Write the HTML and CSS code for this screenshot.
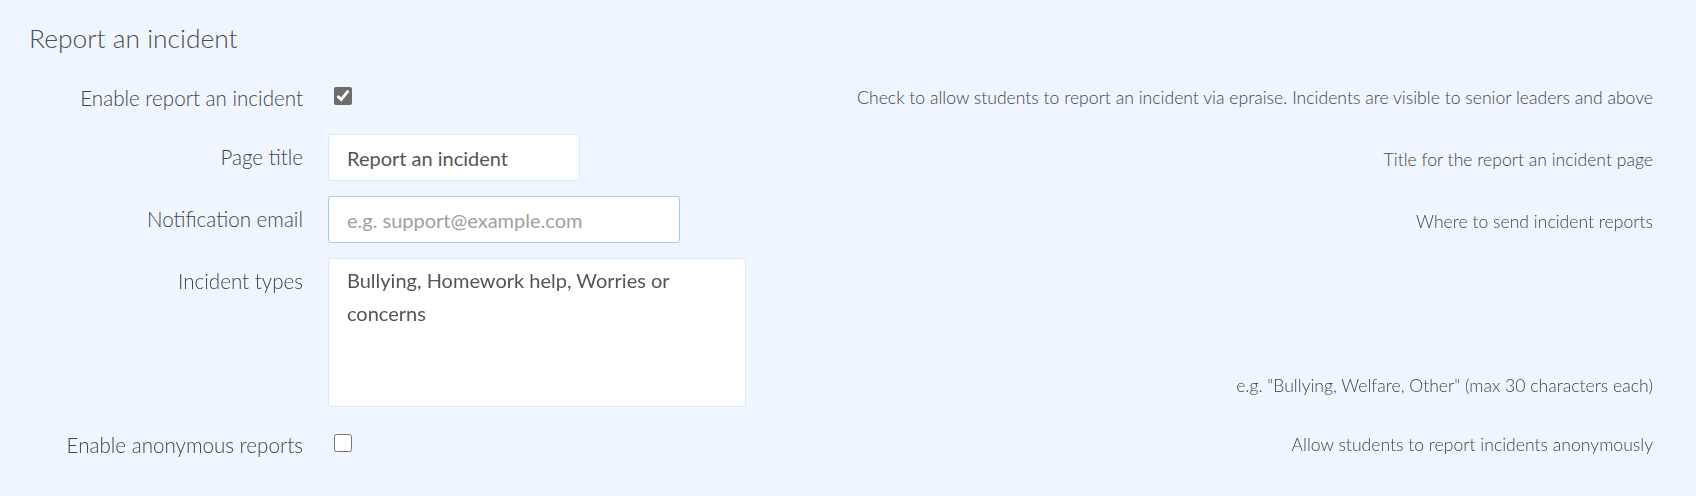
FILE: index.html
```html
<!DOCTYPE html>
<html lang="en">
<head>
    <meta charset="UTF-8">
    <meta name="viewport" content="width=device-width, initial-scale=1.0">
    <title>Report an incident</title>
    <link rel="stylesheet" href="styles.css">
</head>
<body>
    <div class="panel">
        <h2 class="panel-title">Report an incident</h2>

        <div class="form-row">
            <label class="form-label" for="enable-report">Enable report an incident</label>
            <div class="form-control check-wrap">
                <input type="checkbox" id="enable-report" checked>
            </div>
            <div class="form-help">Check to allow students to report an incident via epraise. Incidents are visible to senior leaders and above</div>
        </div>

        <div class="form-row">
            <label class="form-label" for="page-title">Page title</label>
            <div class="form-control">
                <input type="text" class="text-input title-input" id="page-title" value="Report an incident">
            </div>
            <div class="form-help">Title for the report an incident page</div>
        </div>

        <div class="form-row">
            <label class="form-label" for="notify-email">Notification email</label>
            <div class="form-control">
                <input type="email" class="text-input email-input" id="notify-email" placeholder="e.g. support@example.com" autofocus>
            </div>
            <div class="form-help">Where to send incident reports</div>
        </div>

        <div class="form-row">
            <label class="form-label" for="incident-types">Incident types</label>
            <div class="form-control">
                <textarea class="text-input types-input" id="incident-types">Bullying, Homework help, Worries or concerns</textarea>
            </div>
            <div class="form-help">e.g. "Bullying, Welfare, Other" (max 30 characters each)</div>
        </div>

        <div class="form-row">
            <label class="form-label" for="anon-reports">Enable anonymous reports</label>
            <div class="form-control check-wrap">
                <input type="checkbox" id="anon-reports">
            </div>
            <div class="form-help">Allow students to report incidents anonymously</div>
        </div>
    </div>
    <script>
        document.getElementById('notify-email').focus();
    </script>
</body>
</html>
```

FILE: styles.css
```css
body {
    margin: 0;
    background-color: #eff6ff;
    font-family: Lato, "Open Sans", sans-serif;
    color: #555;
}

.panel {
    padding: 19px 43px 20px 29px;
}

.panel-title {
    margin: 0 0 18px 0;
    font-size: 26.4px;
    font-weight: 300;
    line-height: 38px;
    color: #4d4d4d;
}

.form-row {
    display: flex;
    margin-bottom: 15px;
}

.form-label {
    width: 274px;
    flex-shrink: 0;
    margin-right: 25px;
    padding-top: 10px;
    text-align: right;
    font-size: 20.6px;
    font-weight: 300;
    line-height: 27px;
    color: #444;
}

.form-control {
    flex-shrink: 0;
}

.check-wrap {
    height: 44px;
    padding-left: 6px;
}

.check-wrap input {
    width: 18px;
    height: 18px;
    margin: 12px 0 0 0;
    accent-color: #6d6d6d;
}

.text-input {
    box-sizing: border-box;
    display: block;
    margin: 0;
    padding: 9px 18px;
    border: 1px solid #d8e8fb;
    border-radius: 3px;
    background-color: #fff;
    font-family: Lato, "Open Sans", sans-serif;
    font-size: 20px;
    line-height: 27px;
    color: #555;
    outline: none;
}

.text-input::placeholder {
    color: #a0a0a0;
}

.text-input:focus {
    border-color: #a8c9f3;
}

.title-input {
    width: 252px;
    height: 47px;
}

.email-input {
    width: 352px;
    height: 47px;
}

.types-input {
    width: 418px;
    height: 149px;
    padding-top: 5px;
    line-height: 33px;
    resize: none;
}

.form-help {
    flex: 1;
    align-self: flex-end;
    padding-bottom: 9px;
    text-align: right;
    font-size: 17.6px;
    font-weight: 300;
    line-height: 24px;
    color: #444;
}
```
